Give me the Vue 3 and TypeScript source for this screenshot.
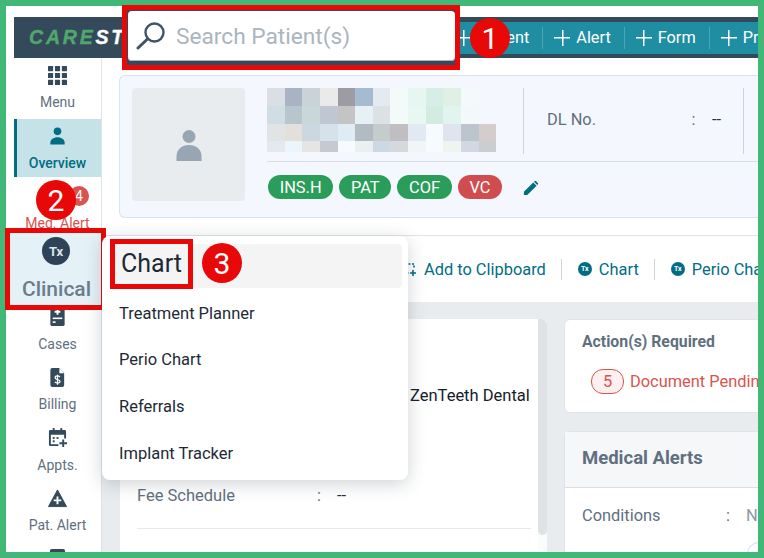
<script setup lang="ts">
interface Tile {
    id: number;
    color: string;
}

const mosaicRows: string[][] = [
    ["#dadfe5", "#a9b3c4", "#cad3d6", "#eaeaea", "#9c9ca2", "#a5bbd1", "#e4ebf0", "#f3fafa", "#e6f6f1", "#d7eee6", "#e0f0e4", "#f3fafb", "#f4f8fe"],
    ["#d1dde4", "#b7c6cc", "#c9d6da", "#bfc8d2", "#c4c4c3", "#e7f1f5", "#dbe1e4", "#f3fafa", "#e9f7f3", "#d3ece2", "#e1f5ee", "#f3f9fb", "#f4f8fe"],
    ["#e1e4e4", "#e3e0dc", "#ccd7e1", "#d5e2e9", "#deedf5", "#b2bac2", "#c4cdcb", "#c1bec2", "#e1e9f2", "#f7fafe", "#dfe4ee", "#bcc4cd", "#d4cccd"],
    ["#e4e8f0", "#ebf5fc", "#e5e6e4", "#c6c9d2", "#f8fbfe", "#eaeff1", "#cdd8e5", "#d5d9dd", "#f1f5f6", "#f7fafe", "#f0f4f1", "#d2d8e1", "#cbcdd1"],
];

const tiles: Tile[] = mosaicRows.flat().map((color, id) => ({ id, color }));

const actions = ["Patient", "Alert", "Form", "Procedure"];
const chips = [
    { label: "INS.H", red: false },
    { label: "PAT", red: false },
    { label: "COF", red: false },
    { label: "VC", red: true },
];
const menuItems = ["Treatment Planner", "Perio Chart", "Referrals", "Implant Tracker"];
</script>

<template>
    <div class="page">
        <div class="screen">
            <header class="topbar">
                <div class="logo"><span class="logo-green">CARE</span><span>STACK</span></div>
                <nav class="actions">
                    <template v-for="(action, i) in actions" :key="action">
                        <span v-if="i > 0" class="action-sep"></span>
                        <span class="action"><span class="plus"></span>{{ action }}</span>
                    </template>
                </nav>
            </header>

            <div class="body">
                <aside class="sidebar">
                    <div class="side-item">
                        <svg class="side-icon" viewBox="0 0 20 20" fill="#34495a">
                            <rect x="0" y="0" width="5.4" height="5.4" rx=".6" />
                            <rect x="7.3" y="0" width="5.4" height="5.4" rx=".6" />
                            <rect x="14.6" y="0" width="5.4" height="5.4" rx=".6" />
                            <rect x="0" y="7.3" width="5.4" height="5.4" rx=".6" />
                            <rect x="7.3" y="7.3" width="5.4" height="5.4" rx=".6" />
                            <rect x="14.6" y="7.3" width="5.4" height="5.4" rx=".6" />
                            <rect x="0" y="14.6" width="5.4" height="5.4" rx=".6" />
                            <rect x="7.3" y="14.6" width="5.4" height="5.4" rx=".6" />
                            <rect x="14.6" y="14.6" width="5.4" height="5.4" rx=".6" />
                        </svg>
                        <span>Menu</span>
                    </div>
                    <div class="side-item active">
                        <svg class="side-icon" viewBox="0 0 20 20" fill="#006d84">
                            <circle cx="10" cy="4.6" r="4" />
                            <path d="M2.5 18.5v-2.2c0-3.2 3.3-5.6 7.5-5.6s7.500 2.400 7.500 5.600v2.200z" />
                        </svg>
                        <span>Overview</span>
                    </div>
                    <div class="side-item alert">
                        <span class="side-icon"></span>
                        <span>Med. Alert</span>
                    </div>
                    <!-- Clinical is drawn by the highlighted callout below -->
                    <div class="side-item"></div>
                    <div class="side-item">
                        <svg class="side-icon" viewBox="0 0 20 20" fill="#34495a">
                            <rect x="2.500" y="-1" width="15" height="20" rx="2" />
                            <path d="M9 1h2v2h2v2h-2v2H9V5H7V3h2z" fill="#fff" />
                            <rect x="5" y="10" width="10" height="1.700" fill="#fff" />
                            <rect x="5" y="14" width="3" height="1.700" fill="#fff" />
                        </svg>
                        <span>Cases</span>
                    </div>
                    <div class="side-item">
                        <svg class="side-icon" viewBox="0 0 20 20" fill="#34495a">
                            <path d="M4.500 0h7.500l5 5.500V18a2 2 0 0 1-2 2H4.500a2 2 0 0 1-2-2V2a2 2 0 0 1 2-2z" />
                            <path d="M12 0v5.500h5" fill="#fff" />
                            <path d="M12.500 9.500c-.6-.8-1.500-1.100-2.500-1.100-1.400 0-2.500.7-2.500 1.900 0 2.600 5.200 1.200 5.200 3.700 0 1.200-1.200 1.900-2.700 1.900-1.100 0-2.100-.4-2.800-1.200M10 7v10.500" fill="none" stroke="#fff" stroke-width="1.300" />
                        </svg>
                        <span>Billing</span>
                    </div>
                    <div class="side-item appts">
                        <svg class="side-icon" viewBox="0 0 20 20" fill="#34495a">
                            <path d="M5 0h2v2h6V0h2v2h2.500A1.500 1.500 0 0 1 19 3.500v7.500h-2V7H3v10h8v2H2.500A1.500 1.500 0 0 1 1 17.500v-14A1.500 1.500 0 0 1 2.500 2H5z" />
                            <path d="M15 12h2v3h3v2h-3v3h-2v-3h-3v-2h3z" />
                            <rect x="5" y="9.500" width="2" height="2" />
                            <rect x="9" y="9.500" width="2" height="2" />
                            <rect x="5" y="13" width="2" height="2" />
                        </svg>
                        <span>Appts.</span>
                    </div>
                    <div class="side-item">
                        <svg class="side-icon" viewBox="0 0 20 20">
                            <path d="M10 1 19.500 18.500H.5z" fill="#34495a" stroke="#34495a" stroke-width="1" stroke-linejoin="round" />
                            <path d="M9 8h2v3h3v2h-3v3H9v-3H6v-2h3z" fill="#fff" />
                        </svg>
                        <span>Pat. Alert</span>
                    </div>
                    <div class="side-item">
                        <svg class="side-icon" viewBox="0 0 20 20" fill="#34495a">
                            <rect x="2" y="0" width="16" height="20" rx="2" />
                        </svg>
                    </div>
                </aside>

                <main class="main">
                    <section class="banner">
                        <div class="photo">
                            <svg width="28" height="32" viewBox="0 0 28 32" fill="#98a6b3">
                                <circle cx="14" cy="7.500" r="6.500" />
                                <path d="M1.500 32v-5c0-6.500 5.500-11 12.500-11s12.500 4.500 12.500 11v5z" />
                            </svg>
                        </div>
                        <div class="patient">
                            <div class="patient-top">
                                <div class="mosaic">
                                    <i v-for="t in tiles" :key="t.id" :style="{ background: t.color }"></i>
                                </div>
                                <div class="dl-col">
                                    <span class="dl-label">DL No.</span>
                                    <span class="dl-colon">:</span>
                                    <span class="dl-value">--</span>
                                </div>
                            </div>
                            <div class="chips">
                                <span v-for="c in chips" :key="c.label" class="chip" :class="{ red: c.red }">{{ c.label }}</span>
                                <svg class="pencil" viewBox="0 0 18 18" fill="#006d84">
                                    <path d="M1 17v-3.800L11.500 2.700l3.800 3.800L4.800 17z" />
                                    <path d="M12.800 1.400a1.300 1.300 0 0 1 1.900 0l1.900 1.900a1.300 1.300 0 0 1 0 1.900l-.5.500-3.800-3.800z" />
                                </svg>
                            </div>
                        </div>
                    </section>

                    <div class="toolbar">
                        <span class="tool">
                            <svg class="clip-icon" viewBox="0 0 14 16" fill="none" stroke="#006d84" stroke-width="1.600">
                                <path d="M2 3h9v4M2 3v9h4" stroke-dasharray="2 1.500" />
                                <path d="M10 9v6M7 12h6" />
                            </svg>
                            Add to Clipboard
                        </span>
                        <span class="tool-sep"></span>
                        <span class="tool"><span class="tx small teal">Tx</span>Chart</span>
                        <span class="tool-sep"></span>
                        <span class="tool"><span class="tx small teal">Tx</span>Perio Chart</span>
                    </div>

                    <div class="content">
                        <section class="left-panel">
                            <div class="left-scroll">
                                <div class="clinic">ZenTeeth Dental</div>
                                <div class="fee-row">
                                    <span class="fee-label">Fee Schedule</span>
                                    <span class="fee-colon">:</span>
                                    <span class="fee-value">--</span>
                                </div>
                                <div class="fee-line"></div>
                            </div>
                            <div class="scrollbar"><div class="thumb"></div></div>
                        </section>

                        <div class="right-col">
                            <section class="card required">
                                <h3>Action(s) Required</h3>
                                <div class="pending">
                                    <span class="count">5</span>
                                    <span>Document Pending</span>
                                </div>
                            </section>
                            <section class="card alerts">
                                <h2>Medical Alerts</h2>
                                <div class="cond-row">
                                    <span class="cond-label">Conditions</span>
                                    <span class="cond-colon">:</span>
                                    <span class="cond-value">None</span>
                                </div>
                                <span class="cond-ring"></span>
                            </section>
                        </div>
                    </div>
                </main>
            </div>
        </div>

        <!-- callouts drawn over the app -->
        <div class="search-box">
            <div class="search-input">
                <svg class="search-icon" viewBox="0 0 30 28" fill="none">
                    <circle cx="18.500" cy="10.500" r="9" stroke="#3f5566" stroke-width="2.400" />
                    <path d="M11.500 17 2 26" stroke="#3f5566" stroke-width="3" stroke-linecap="round" />
                </svg>
                <span>Search Patient(s)</span>
            </div>
        </div>

        <span class="med-badge">4</span>

        <div class="clinical-box">
            <span class="tx big">Tx</span>
            <span class="clinical-label">Clinical</span>
        </div>

        <div class="dropdown">
            <div class="drop-head"></div>
            <div v-for="m in menuItems" :key="m" class="drop-item">{{ m }}</div>
        </div>
        <div class="chart-box">Chart</div>

        <span class="step step-1">1</span>
        <span class="step step-2">2</span>
        <span class="step step-3">3</span>
    </div>
</template>

<style>
html,
body {
    margin: 0;
    overflow: hidden;
}
</style>

<style scoped>
.page {
    position: relative;
    width: 764px;
    height: 558px;
    box-sizing: border-box;
    padding: 6px;
    background: #41b878;
    overflow: hidden;
    font-family: Roboto, "Liberation Sans", sans-serif;
}

.screen {
    display: flex;
    flex-direction: column;
    height: 100%;
    padding: 11px 0 0 8px;
    box-sizing: border-box;
    background: #fff;
    overflow: hidden;
}

/* top bar */
.topbar {
    display: flex;
    align-items: center;
    flex: 0 0 41px;
    background: #34495a;
    overflow: hidden;
}

.logo {
    flex: 0 0 434px;
    padding-left: 15px;
    box-sizing: border-box;
    color: #fff;
    font-family: "Liberation Sans", sans-serif;
    font-size: 19.500px;
    font-weight: 700;
    font-style: italic;
    letter-spacing: 2.800px;
    -webkit-text-stroke: 0.4px currentColor;
    white-space: nowrap;
}

.logo-green {
    color: #4fa76b;
}

.actions {
    display: flex;
    align-items: center;
    flex: 1;
    min-width: 0;
    height: 32px;
    padding-left: 8px;
    background: #1f8ea3;
    color: #fff;
    font-size: 16.300px;
    white-space: nowrap;
    overflow: hidden;
}

.action {
    display: flex;
    flex: none;
    align-items: center;
    gap: 6px;
}

.plus {
    flex: none;
    width: 16px;
    height: 16px;
    background:
        linear-gradient(#fff, #fff) center / 100% 1.500px no-repeat,
        linear-gradient(#fff, #fff) center / 1.500px 100% no-repeat;
}

.action-sep {
    flex: none;
    width: 1px;
    height: 22px;
    margin: 0 11px 0 13px;
    background: #4ba6b8;
}

/* body */
.body {
    display: flex;
    flex: 1;
    min-height: 0;
}

.sidebar {
    flex: 0 0 87px;
    border-right: 1px solid #dfe4ea;
    background: #fff;
    overflow: hidden;
}

.side-item {
    display: flex;
    flex-direction: column;
    align-items: center;
    height: 60.400px;
    box-sizing: border-box;
    padding-top: 8px;
    color: #5f7080;
    font-size: 14px;
    line-height: 16px;
}

.side-icon {
    display: block;
    flex: none;
    width: 19px;
    height: 19px;
    margin-bottom: 9px;
}

.side-item.appts .side-icon {
    margin-bottom: 10px;
}

.side-item.active {
    border-left: 3px solid #006d84;
    background: #c5e2e8;
    color: #006d84;
    font-weight: 500;
    height: 58px;
    margin: 1px 0 1.400px;
    padding-right: 3px;
}

.side-item.alert {
    color: #d9534f;
}

.main {
    flex: 1;
    min-width: 0;
    display: flex;
    flex-direction: column;
    overflow: hidden;
}

/* patient banner */
.banner {
    display: flex;
    flex: 0 0 143px;
    box-sizing: border-box;
    width: 660px;
    margin: 17px 0 0 17px;
    padding: 12px 0 0 12px;
    border: 1px solid #d5e3f5;
    border-right: 0;
    border-radius: 6px 0 0 6px;
    background: #f4f8fe;
}

.photo {
    display: flex;
    align-items: center;
    justify-content: center;
    flex: 0 0 113px;
    height: 113px;
    border-radius: 4px;
    background: #e9ecef;
}

.patient {
    flex: 1;
    margin-left: 22px;
}

.patient-top {
    display: flex;
    height: 74px;
    border-bottom: 1px solid #d6deea;
    box-sizing: border-box;
}

.mosaic {
    display: grid;
    grid-template-columns: repeat(13, 17.650px);
    grid-template-rows: 18px 17.500px 17.500px 11px;
    flex: 0 0 256px;
    height: 64px;
}

.dl-col {
    display: flex;
    flex: none;
    align-items: center;
    align-self: flex-start;
    width: 196px;
    height: 62px;
    padding: 0 0 4px 23px;
    border-left: 1px solid #ccd5df;
    border-right: 1px solid #ccd5df;
    color: #5f7080;
    font-size: 16.400px;
}

.dl-label {
    width: 144.500px;
}

.dl-colon {
    width: 20.500px;
}

.dl-value {
    color: #26343f;
}

.chips {
    display: flex;
    align-items: center;
    gap: 6px;
    margin: 13px 0 0 1px;
}

.chip {
    display: flex;
    align-items: center;
    height: 24px;
    padding: 0 11.700px;
    border-radius: 12px;
    background: #2a9d5a;
    color: #fff;
    font-size: 16.400px;
}

.chip.red {
    background: #d04c4f;
}

.pencil {
    width: 16px;
    height: 16px;
    margin: 2px 0 0 15px;
}

/* toolbar */
.toolbar {
    display: flex;
    align-items: center;
    flex: 0 0 67px;
    box-sizing: border-box;
    margin-top: 17px;
    padding: 0 0 0 301px;
    border-top: 1px solid #dfe4ea;
    color: #006d84;
    font-size: 16.400px;
    white-space: nowrap;
}

.tool {
    display: flex;
    flex: none;
    align-items: center;
    gap: 7px;
}

.clip-icon {
    width: 14px;
    height: 16px;
}

.tool-sep {
    flex: none;
    width: 1px;
    height: 21px;
    margin: 0 16px 0 15px;
    background: #cfd6dc;
}

.tx {
    display: flex;
    align-items: center;
    justify-content: center;
    flex: none;
    border-radius: 50%;
    background: #2f4358;
    color: #fff;
    font-weight: 700;
}

.tx.small {
    width: 14px;
    height: 14px;
    font-size: 7px;
}

.tx.teal {
    background: #006d84;
}

.tx.big {
    width: 28px;
    height: 28px;
    margin-left: 1px;
    font-size: 13px;
    color: #dfe5ea;
}

/* lower content */
.content {
    display: flex;
    flex: 1;
    min-height: 0;
    gap: 17px;
    padding: 17px 0 0 18px;
    background: #e9ecef;
}

.left-panel {
    display: flex;
    flex: 0 0 427px;
    border-radius: 6px 6px 0 0;
    background: #fff;
    overflow: hidden;
}

.left-scroll {
    flex: 1;
    padding-left: 17px;
}

.clinic {
    margin: 66px 0 0 273px;
    color: #15202b;
    font-size: 16.500px;
    line-height: 22px;
    white-space: nowrap;
}

.fee-row {
    display: flex;
    margin-top: 78px;
    color: #5f7080;
    font-size: 16.500px;
    line-height: 22px;
}

.fee-label {
    width: 180px;
}

.fee-colon {
    width: 20px;
}

.fee-value {
    color: #26343f;
}

.fee-line {
    width: 394px;
    height: 1px;
    margin-top: 21px;
    background: #e6e9ed;
}

.scrollbar {
    flex: 0 0 9px;
    background: #fafbfb;
}

.thumb {
    height: 216px;
    border-radius: 0 0 5px 5px;
    background: #dfe3e6;
}

.right-col {
    display: flex;
    flex-direction: column;
    flex: 0 0 260px;
    gap: 18px;
}

.card {
    box-sizing: border-box;
    border: 1px solid #dfe4ea;
    border-radius: 6px;
    background: #fff;
}

.required {
    height: 94px;
    padding: 12px 0 0 17px;
    white-space: nowrap;
}

.required h3 {
    margin: 0;
    color: #5f7080;
    font-size: 15.800px;
    font-weight: 700;
    line-height: 20px;
}

.pending {
    display: flex;
    align-items: center;
    gap: 6px;
    margin: 17px 0 0 9px;
    color: #d9534f;
    font-size: 16.400px;
}

.count {
    display: flex;
    align-items: center;
    justify-content: center;
    width: 31px;
    height: 23px;
    border: 1px solid #d9534f;
    border-radius: 12px;
    background: #fdf0f0;
}

.alerts {
    position: relative;
    flex: 1;
    border-bottom: 0;
    border-radius: 6px 6px 0 0;
}

.alerts h2 {
    margin: 0;
    height: 55px;
    padding-left: 17px;
    border-bottom: 1px solid #d6deea;
    background: #f6f7f9;
    color: #5f7080;
    font-size: 18.500px;
    font-weight: 700;
    line-height: 52px;
}

.cond-row {
    display: flex;
    margin-top: 17px;
    padding-left: 17px;
    color: #5f7080;
    font-size: 16.400px;
    line-height: 22px;
    white-space: nowrap;
}

.cond-label {
    width: 144px;
}

.cond-colon {
    width: 20px;
}

.cond-value {
    color: #8a98a5;
}

.cond-ring {
    position: absolute;
    left: 182px;
    top: 110px;
    width: 22px;
    height: 22px;
    border: 1px solid #d8d0f5;
    border-radius: 50%;
}

/* callouts */
.search-box {
    position: absolute;
    left: 122px;
    top: 5px;
    width: 338px;
    height: 65px;
    box-sizing: border-box;
    padding: 1px 0 4px 1px;
    border: 5px solid #e80808;
    background: #34495a;
}

.search-input {
    display: flex;
    align-items: center;
    height: 100%;
    box-sizing: border-box;
    padding-left: 8px;
    border-radius: 4px;
    background: #fff;
    box-shadow: inset 0 -1px 0 #aab3bb;
    color: #a9b5c0;
    font-size: 22.700px;
}

.search-icon {
    width: 30px;
    height: 28px;
    margin-right: 10px;
}

.med-badge {
    position: absolute;
    left: 69px;
    top: 186px;
    display: flex;
    align-items: center;
    justify-content: center;
    width: 20px;
    height: 20px;
    border-radius: 50%;
    background: #d9534f;
    color: #fff;
    font-size: 14px;
}

.clinical-box {
    position: absolute;
    left: 5px;
    top: 228px;
    display: flex;
    flex-direction: column;
    align-items: center;
    width: 101px;
    height: 82px;
    box-sizing: border-box;
    padding-top: 4px;
    border: 5px solid #e80808;
    background: #e4f1f6;
}

.clinical-label {
    margin: 10px 0 0 2px;
    color: #6b7c8c;
    font-size: 21px;
    font-weight: 500;
    line-height: 28px;
}

.dropdown {
    position: absolute;
    left: 102px;
    top: 236px;
    width: 306px;
    height: 244px;
    box-sizing: border-box;
    padding: 8px 6px 0 9px;
    border-radius: 8px;
    background: #fff;
    box-shadow: 0 4px 18px rgba(40, 55, 70, 0.22);
}

.drop-head {
    height: 44px;
    margin-bottom: 2.600px;
    border-radius: 4px;
    background: #f4f4f4;
}

.drop-item {
    height: 46.700px;
    padding-left: 8px;
    color: #1d2a36;
    font-size: 16.500px;
    line-height: 46.700px;
}

.chart-box {
    position: absolute;
    left: 110px;
    top: 239px;
    width: 83px;
    height: 50px;
    box-sizing: border-box;
    padding-left: 6px;
    border: 5px solid #e80808;
    color: #1d2a36;
    font-size: 25px;
    line-height: 40px;
}

.step {
    position: absolute;
    display: flex;
    align-items: center;
    justify-content: center;
    width: 40px;
    height: 40px;
    border-radius: 50%;
    background: #e80808;
    color: #fff;
    font-size: 30px;
}

.step-1 {
    left: 470px;
    top: 18px;
}

.step-2 {
    left: 36px;
    top: 180px;
}

.step-3 {
    left: 202px;
    top: 243px;
}
</style>
